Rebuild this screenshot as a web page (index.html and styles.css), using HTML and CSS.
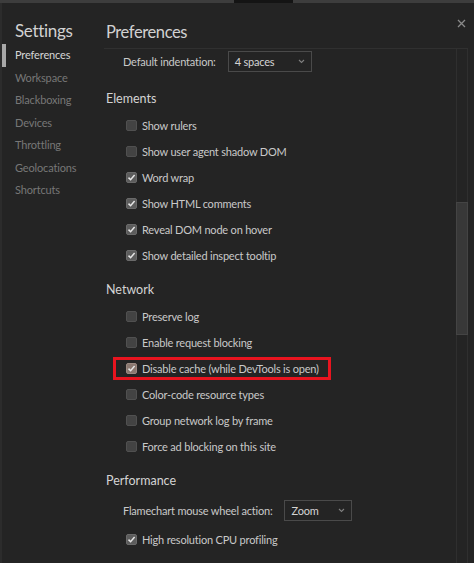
FILE: index.html
```html
<!DOCTYPE html>
<html>
<head>
<meta charset="utf-8">
<link rel="stylesheet" href="styles.css">
</head>
<body>
<div class="topbar"><div class="tb-a"></div><div class="tb-dark"></div><div class="tb-b"></div></div>
<div class="window">
  <aside class="sidebar">
    <div class="side-title">Settings</div>
    <ul class="side-list">
      <li class="side-item active">Preferences</li>
      <li class="side-item">Workspace</li>
      <li class="side-item">Blackboxing</li>
      <li class="side-item">Devices</li>
      <li class="side-item">Throttling</li>
      <li class="side-item">Geolocations</li>
      <li class="side-item">Shortcuts</li>
    </ul>
  </aside>
  <main class="main">
    <header class="main-header">
      <div class="main-title">Preferences</div>
      <div class="close">
        <svg width="9" height="9" viewBox="0 0 9 9"><path d="M1 1L8 8M8 1L1 8" stroke="#8a8a8a" stroke-width="1.3"/></svg>
      </div>
    </header>
    <div class="scroller">
      <div class="content">
        <div class="field-row first">
          <span class="field-label">Default indentation:</span>
          <span class="select sel-indent"><span>4 spaces</span><svg class="chev" width="7" height="5" viewBox="0 0 7 5"><path d="M1 1L3.5 3.5L6 1" stroke="#8a8a8a" stroke-width="1.1" fill="none"/></svg></span>
        </div>

        <div class="section-title">Elements</div>
        <div class="check-row"><span class="cb"></span><span class="cb-label">Show rulers</span></div>
        <div class="check-row"><span class="cb"></span><span class="cb-label">Show user agent shadow DOM</span></div>
        <div class="check-row"><span class="cb checked"><svg width="9" height="9" viewBox="0 0 9 9"><path d="M1.5 4.6L3.6 6.7L7.6 2" stroke="#e6e6e6" stroke-width="1.5" fill="none"/></svg></span><span class="cb-label">Word wrap</span></div>
        <div class="check-row"><span class="cb checked"><svg width="9" height="9" viewBox="0 0 9 9"><path d="M1.5 4.6L3.6 6.7L7.6 2" stroke="#e6e6e6" stroke-width="1.5" fill="none"/></svg></span><span class="cb-label">Show HTML comments</span></div>
        <div class="check-row"><span class="cb checked"><svg width="9" height="9" viewBox="0 0 9 9"><path d="M1.5 4.6L3.6 6.7L7.6 2" stroke="#e6e6e6" stroke-width="1.5" fill="none"/></svg></span><span class="cb-label">Reveal DOM node on hover</span></div>
        <div class="check-row"><span class="cb checked"><svg width="9" height="9" viewBox="0 0 9 9"><path d="M1.5 4.6L3.6 6.7L7.6 2" stroke="#e6e6e6" stroke-width="1.5" fill="none"/></svg></span><span class="cb-label">Show detailed inspect tooltip</span></div>

        <div class="section-title gap">Network</div>
        <div class="check-row"><span class="cb"></span><span class="cb-label">Preserve log</span></div>
        <div class="check-row"><span class="cb"></span><span class="cb-label">Enable request blocking</span></div>
        <div class="check-row"><span class="highlight"><span class="cb checked tinted"><svg width="9" height="9" viewBox="0 0 9 9"><path d="M1.5 4.6L3.6 6.7L7.6 2" stroke="#e6e6e6" stroke-width="1.5" fill="none"/></svg></span><span class="cb-label">Disable cache (while DevTools is open)</span></span></div>
        <div class="check-row"><span class="cb"></span><span class="cb-label">Color-code resource types</span></div>
        <div class="check-row"><span class="cb"></span><span class="cb-label">Group network log by frame</span></div>
        <div class="check-row"><span class="cb"></span><span class="cb-label">Force ad blocking on this site</span></div>

        <div class="section-title gap">Performance</div>
        <div class="field-row tall">
          <span class="field-label">Flamechart mouse wheel action:</span>
          <span class="select sel-zoom"><span>Zoom</span><svg class="chev" width="7" height="5" viewBox="0 0 7 5"><path d="M1 1L3.5 3.5L6 1" stroke="#8a8a8a" stroke-width="1.1" fill="none"/></svg></span>
        </div>
        <div class="check-row"><span class="cb checked"><svg width="9" height="9" viewBox="0 0 9 9"><path d="M1.5 4.6L3.6 6.7L7.6 2" stroke="#e6e6e6" stroke-width="1.5" fill="none"/></svg></span><span class="cb-label">High resolution CPU profiling</span></div>
      </div>
      <div class="scrollbar"><div class="thumb"></div></div>
    </div>
  </main>
</div>
</body>
</html>
```

FILE: styles.css
```css
* { box-sizing: border-box; }
html, body {
  margin: 0;
  padding: 0;
  width: 474px;
  height: 563px;
  overflow: hidden;
  background: #242424;
  font-family: "Lato", "Open Sans", sans-serif;
  color: #c9c9c9;
}
.topbar {
  display: flex;
  height: 3px;
}
.tb-a { width: 234px; background: #3d3d3d; }
.tb-dark { width: 59px; background: #141414; }
.tb-b { flex: 1; background: #3d3d3d; }

.window {
  display: flex;
  height: 560px;
  border-left: 2px solid #2c2c2c;
}
.sidebar {
  width: 102px;
  flex: none;
}
.side-title {
  height: 41px;
  padding-left: 13px;
  padding-top: 16px;
  font-size: 17px;
  letter-spacing: -0.3px;
  line-height: 24px;
  color: #d2d2d2;
}
.side-list {
  list-style: none;
  margin: 0;
  padding: 0;
}
.side-item {
  height: 22.5px;
  line-height: 22.5px;
  font-size: 11px;
  letter-spacing: -0.15px;
  color: #777;
  border-left: 4px solid transparent;
  padding-left: 9px;
}
.side-item.active {
  color: #d6d6d6;
  border-left-color: #a8a8a8;
}

.main {
  flex: 1;
  display: flex;
  flex-direction: column;
  min-width: 0;
}
.main-header {
  height: 45px;
  display: flex;
  align-items: flex-start;
  justify-content: space-between;
  padding-left: 2px;
}
.main-title {
  padding-top: 17px;
  font-size: 16.5px;
  letter-spacing: -0.4px;
  line-height: 24px;
  color: #d2d2d2;
}
.close {
  padding-top: 9px;
  padding-right: 8px;
}
.scroller {
  flex: 1;
  display: flex;
  border-top: 1px solid #303030;
  margin-right: 6px;
}
.content {
  flex: 1;
  padding-left: 2px;
}
.scrollbar {
  width: 12px;
  border-left: 1px solid #2f2f2f;
  border-right: 1px solid #2f2f2f;
  padding-top: 153px;
}
.thumb {
  height: 133px;
  margin: 0 -1px;
  background: #383838;
  border: 1px solid #444;
}

.field-row {
  display: flex;
  align-items: center;
  height: 24px;
  padding-left: 17px;
  font-size: 11px;
  letter-spacing: -0.2px;
}
.field-row.tall { height: 32px; }
.field-label { color: #c9c9c9; }
.select {
  display: flex;
  align-items: center;
  justify-content: space-between;
  height: 21px;
  margin-left: 12px;
  padding: 0 6px 0 6px;
  border: 1px solid #4a4a4a;
  color: #d4d4d4;
}
.sel-indent { width: 84px; }
.sel-zoom { width: 68px; }
.chev { opacity: 0.9; }

.section-title {
  height: 26px;
  line-height: 26px;
  margin-top: 13px;
  font-size: 12.5px;
  color: #d4d4d4;
}
.section-title.gap { margin-top: 9px; }

.check-row {
  display: flex;
  align-items: center;
  height: 26px;
  padding-left: 20px;
  font-size: 11px;
  letter-spacing: -0.2px;
}
.cb {
  width: 11px;
  height: 11px;
  flex: none;
  border-radius: 2px;
  background: #434343;
  border: 1px solid #505050;
  display: flex;
  align-items: center;
  justify-content: center;
  margin-right: 5px;
}
.cb.checked {
  background: #5c5c5c;
  border-color: #6a6a6a;
}
.cb.tinted {
  background: #8a7870;
  border-color: #9a8880;
}
.cb-label { color: #c9c9c9; white-space: nowrap; }
.highlight {
  display: flex;
  align-items: center;
  height: 23px;
  margin-left: -13px;
  padding: 0 9px 0 10px;
  border: 3px solid #e8141f;
}
```
